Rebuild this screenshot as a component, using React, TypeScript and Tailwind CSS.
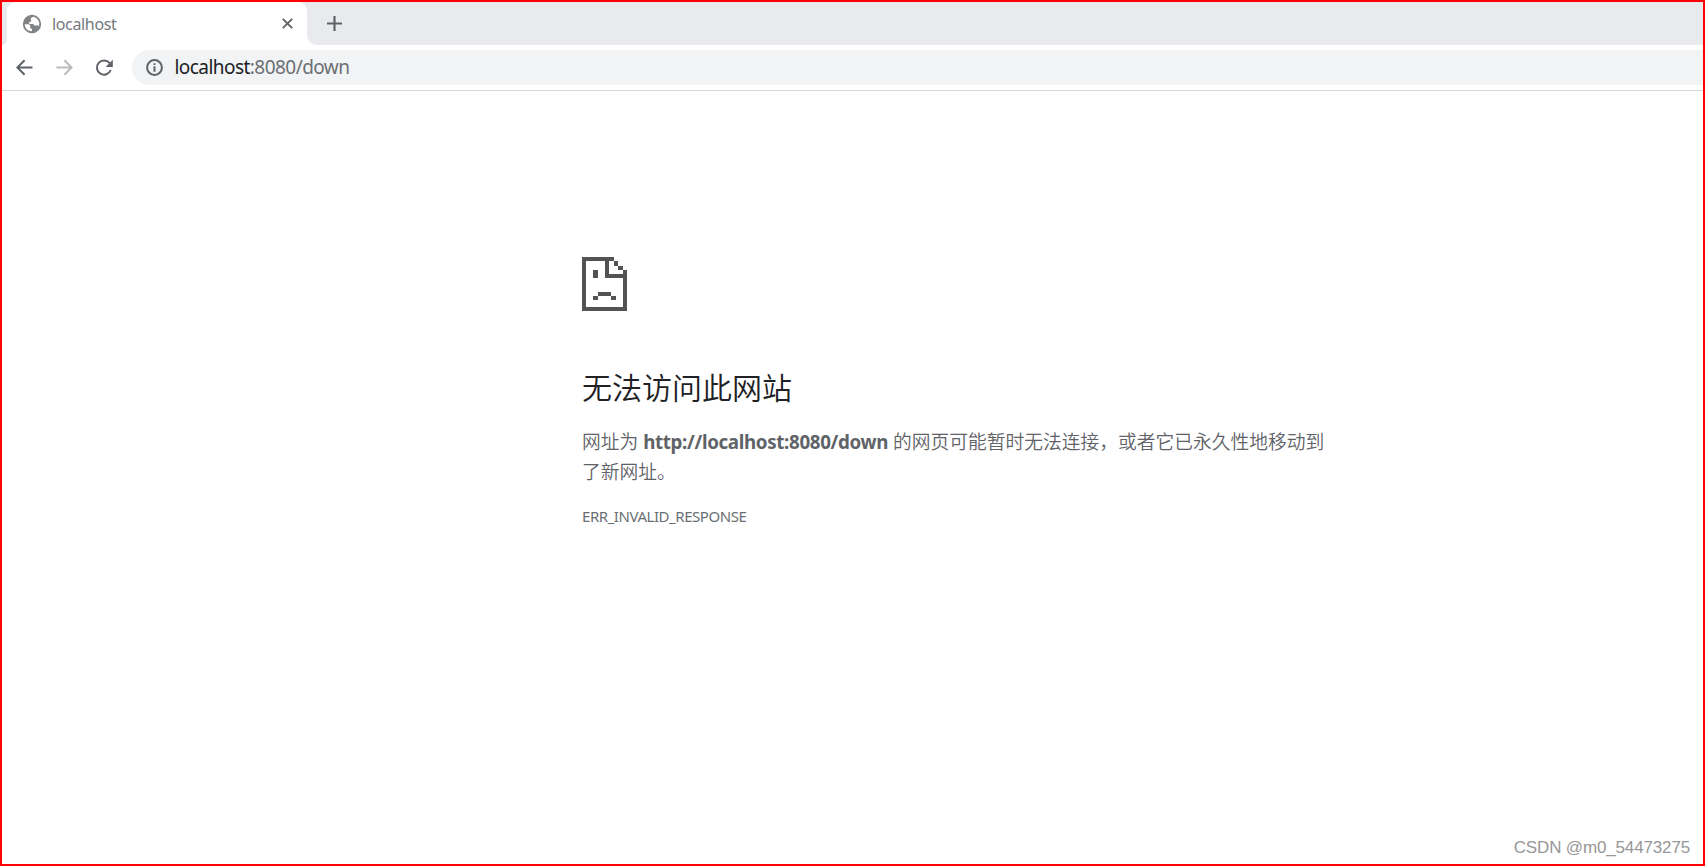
import React from 'react'

const GlobeIcon = () => (
  <svg className="h-[22px] w-[22px] shrink-0" viewBox="0 0 24 24" fill="#808284">
    <path
      fillRule="evenodd"
      d="M12 2a10 10 0 1 0 0 20 10 10 0 0 0 0-20zM13.6 4.2C12.2 4.6 11 5.4 10.6 6.6c-.3 1 .6 1.4.6 2.2 0 1-1.4.8-2.2 1.4-.6.6-.2 1.6.6 1.8h3.4c1 .2 1 1.2 1.8 1.6 1 .4 2-.4 3.2-.2.8.2 1.2.8 1.6 1.2a8 8 0 0 0-6-10.4zM4 12.2a8 8 0 0 0 7.6 7.8c.6-1 .8-1.8.2-2.6-.6-.8-1.8-.6-2-1.600-.2-1 .8-1.400.4-2.200-.4-1-2-1.200-3.200-1.400z"
    />
  </svg>
)

const TabBar = () => {
  return (
    <div className="flex h-[43px] bg-[#e8eaed]">
      <div className="flex w-[5px] bg-white">
        <div className="w-full rounded-br-[8px] bg-[#e8eaed]" />
      </div>
      <div className="flex bg-[#e8eaed]">
        <div className="flex w-[300px] items-center rounded-t-[9px] bg-white pl-[14px]">
          <GlobeIcon />
          <span className="ml-[9px] flex-1 pt-[1px] text-[16px] tracking-[-0.35px] text-[#74787d]">localhost</span>
          <svg className="mr-[14px] h-[11px] w-[11px]" viewBox="0 0 11 11" fill="none" stroke="#5f6368" strokeWidth="1.9">
            <path d="M.8.8l9.4 9.4M10.2.8L.8 10.2" />
          </svg>
        </div>
      </div>
      <div className="flex flex-1 bg-white">
        <div className="flex flex-1 items-center rounded-bl-[10px] bg-[#e8eaed] pl-[20px]">
          <svg className="h-[15px] w-[15px]" viewBox="0 0 15 15" fill="none" stroke="#5f6368" strokeWidth="2.2">
            <path d="M7.5 0v15M0 7.5h15" />
          </svg>
        </div>
      </div>
    </div>
  )
}

const Toolbar = () => {
  return (
    <div className="flex h-[46px] items-center border-b border-[#d5d7da] bg-white pl-[14px]">
      <svg className="h-[17px] w-[17px]" viewBox="0 0 17 17" fill="none" stroke="#5f6368" strokeWidth="2">
        <path d="M16.5 8.5H1.8M8.6 1.2L1.4 8.5l7.2 7.3" />
      </svg>
      <svg className="ml-[23px] h-[17px] w-[17px]" viewBox="0 0 17 17" fill="none" stroke="#babcbe" strokeWidth="2">
        <path d="M.5 8.5h14.7M8.4 1.2l7.2 7.3-7.2 7.3" />
      </svg>
      <svg className="ml-[22px] h-[18px] w-[18px]" viewBox="0 0 18 18">
        <path d="M14.6 4.2A7.1 7.1 0 1 0 15.7 11" fill="none" stroke="#5f6368" strokeWidth="2" />
        <path d="M17.8.8v7.2h-7.2z" fill="#5f6368" />
      </svg>
      <div className="ml-[19px] flex h-[35px] flex-1 items-center rounded-l-full bg-[#f1f3f4] pl-[14px]">
        <svg className="h-[17px] w-[17px]" viewBox="0 0 17 17">
          <circle cx="8.5" cy="8.5" r="7.4" fill="none" stroke="#5f6368" strokeWidth="2" />
          <path d="M7.5 4.2h2v1.8h-2zM7.5 7.3h2v5.4h-2z" fill="#5f6368" />
        </svg>
        <span className="ml-[11.500px] text-[19px] tracking-[-0.55px] text-[#6b6f74]">
          <span className="text-[#202124]">localhost</span>:8080/down
        </span>
      </div>
    </div>
  )
}

const SadPage = () => (
  <svg className="h-[54px] w-[45px]" viewBox="0 0 45 54" fill="#535353" shapeRendering="crispEdges">
    <path d="M0 0h32v4H27v13h18v37H0zM4 4v46h37V21H23V4z" fillRule="evenodd" />
    <path d="M41 13h4v8h-4zM32 4h4v5h-4zM36 9h5v4h-5zM11 13h5v8h-5zM16 35h13v4H16zM11 39h5v4h-5zM29 39h5v4h-5z" />
  </svg>
)

const App = () => {
  return (
    <div className="flex h-[866px] w-[1705px] flex-col overflow-hidden border-2 border-[#ff0000] bg-white font-['Noto_Sans','Noto_Sans_CJK_SC',sans-serif]">
      <TabBar />
      <Toolbar />
      <main className="ml-[580px] w-[770px] flex-1 pt-[166px] text-[18.75px] leading-[30px] font-[350] text-[#5f6368]">
        <SadPage />
        <h1 className="mt-[57px] text-[30px] leading-[36px] font-[350] text-[#202124] font-['Noto_Sans_CJK_SC',sans-serif]">无法访问此网站</h1>
        <p className="mt-[23px]">
          网址为 <strong className="font-bold tracking-[-0.34px]">http://localhost:8080/down</strong> 的网页可能暂时无法连接，或者它已永久性地移动到
          <br />
          了新网址。
        </p>
        <div className="mt-[17px] text-[15px] leading-[24px] font-normal tracking-[-0.45px] text-[#6b6f74]">ERR_INVALID_RESPONSE</div>
      </main>
      <footer className="flex justify-end pr-[13px] pb-[6px] font-['Liberation_Sans',sans-serif] text-[17px] leading-[20px] tracking-[-0.15px] text-[#979797]">
        CSDN @m0_54473275
      </footer>
    </div>
  )
}

export default App
